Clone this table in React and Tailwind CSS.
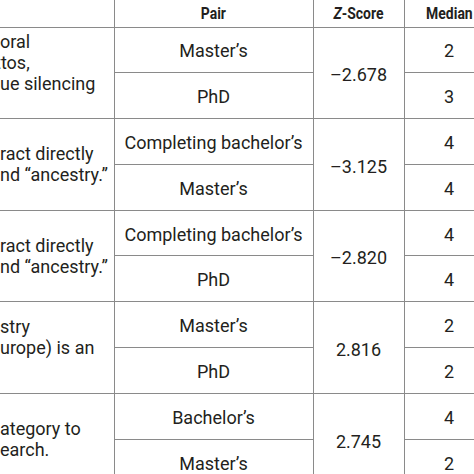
import React from 'react';

const groups = [
  {
    lines: ['oral', 'ttos,', 'ue silencing', '\u00a0'],
    shifts: ['', '-ml-[5px]', '', ''],
    z: '–2.678',
    rows: [
      { pair: 'Master’s', median: '2' },
      { pair: 'PhD', median: '3' },
    ],
  },
  {
    lines: ['ract directly', 'nd “ancestry.”'],
    z: '–3.125',
    rows: [
      { pair: 'Completing bachelor’s', median: '4' },
      { pair: 'Master’s', median: '4' },
    ],
  },
  {
    lines: ['ract directly', 'nd “ancestry.”'],
    z: '–2.820',
    rows: [
      { pair: 'Completing bachelor’s', median: '4' },
      { pair: 'PhD', median: '4' },
    ],
  },
  {
    lines: ['stry', 'urope) is an', '\u00a0'],
    z: '2.816',
    rows: [
      { pair: 'Master’s', median: '2' },
      { pair: 'PhD', median: '2' },
    ],
  },
  {
    lines: ['ategory to', 'earch.'],
    z: '2.745',
    rows: [
      { pair: 'Bachelor’s', median: '4' },
      { pair: 'Master’s', median: '2' },
    ],
  },
];

const HeadText = ({ children }) => (
  <span className="inline-block scale-x-[0.82] origin-center">{children}</span>
);

export default function App() {
  return (
    <div
      className="w-[474px] h-[474px] overflow-hidden bg-white text-[#231f20]"
      style={{ fontFamily: 'Roboto, "Liberation Sans", sans-serif' }}
    >
      <table className="table-fixed border-collapse w-[494px] text-[18px]">
        <colgroup>
          <col className="w-[114px]" />
          <col className="w-[199px]" />
          <col className="w-[91px]" />
          <col className="w-[90px]" />
        </colgroup>
        <thead>
          <tr className="h-[27px]">
            <th className="border-r border-b border-[#8a8a8a]" />
            <th className="border border-t-0 border-[#8a8a8a] text-[17px] font-bold text-center p-0">
              <HeadText>Pair</HeadText>
            </th>
            <th className="border border-t-0 border-[#8a8a8a] text-[17px] font-bold text-center p-0">
              <HeadText><em>Z</em>-Score</HeadText>
            </th>
            <th className="border border-t-0 border-[#8a8a8a] text-[17px] font-bold text-center p-0">
              <HeadText>Median</HeadText>
            </th>
          </tr>
        </thead>
        <tbody>
          {groups.map((g, gi) => (
            <React.Fragment key={`group-${gi}`}>
              <tr className="h-[45.8px]">
                <td rowSpan={2} className="border-r border-b border-[#8a8a8a] align-middle p-0">
                  <div className="overflow-hidden w-[113px] leading-[21px] whitespace-nowrap">
                    {g.lines.map((line, li) => (
                      <div key={`line-${li}`} className={g.shifts ? g.shifts[li] : ''}>
                        {line}
                      </div>
                    ))}
                  </div>
                </td>
                <td className="border border-[#8a8a8a] text-center p-0 pt-[2px]">{g.rows[0].pair}</td>
                <td rowSpan={2} className="border border-[#8a8a8a] text-center p-0 pt-[4px]">{g.z}</td>
                <td className="border border-[#8a8a8a] text-center p-0 pt-[2px]">{g.rows[0].median}</td>
              </tr>
              <tr className="h-[45.8px]">
                <td className="border border-[#8a8a8a] text-center p-0 pt-[2px]">{g.rows[1].pair}</td>
                <td className="border border-[#8a8a8a] text-center p-0 pt-[2px]">{g.rows[1].median}</td>
              </tr>
            </React.Fragment>
          ))}
        </tbody>
      </table>
    </div>
  );
}
